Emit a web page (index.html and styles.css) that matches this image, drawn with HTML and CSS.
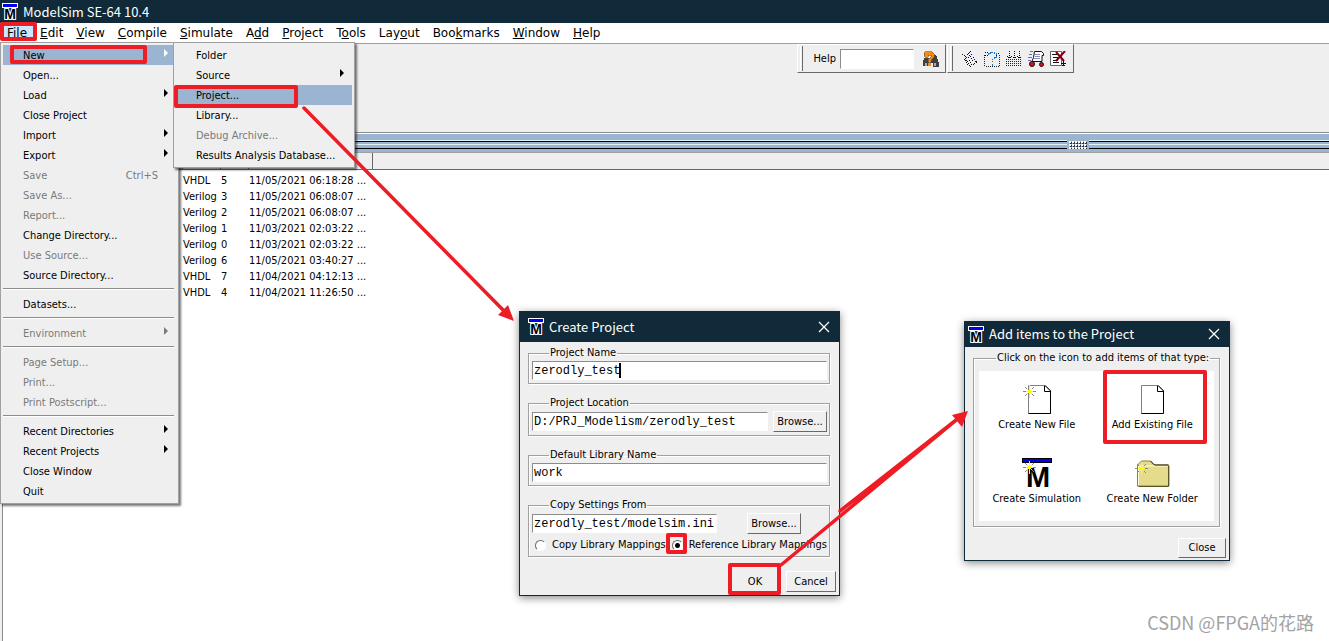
FILE: index.html
```html
<!DOCTYPE html>
<html lang="en">
<head>
<meta charset="utf-8">
<title>ModelSim SE-64 10.4</title>
<link rel="stylesheet" href="styles.css">
</head>
<body>
<svg class="defs" width="0" height="0" aria-hidden="true">
  <symbol id="logo" viewBox="0 0 16 17">
    <rect x="0" y="0" width="16" height="5" fill="#fff"/>
    <rect x="1" y="1" width="14" height="3" fill="#0000f4"/>
    <text class="logo-m" x="8" y="16">M</text>
  </symbol>
  <symbol id="spark" viewBox="0 0 13 13">
    <path d="M2 2l9 9M11 2l-9 9M0 6.500h3M10 6.500h3" stroke="#8a8a80"/>
    <path d="M6.500 0v13M3 6.500h7M4 4l5 5M9 4L4 9" stroke="#ffff00"/>
  </symbol>
  <symbol id="page" viewBox="0 0 24 30">
    <path d="M.5 .5h17l5 5v23h-22z" fill="#fff" stroke="#808080"/>
    <path d="M17 .5l5.500 5.500v22.500H.5M16.500 1v5.500h6" fill="none" stroke="#000"/>
  </symbol>
</svg>

<header class="titlebar">
  <svg class="logo"><use href="#logo"/></svg>
  <span>ModelSim SE-64 10.4</span>
</header>
<nav class="menubar">
  <button class="open"><u>F</u>ile</button><button><u>E</u>dit</button><button><u>V</u>iew</button><button><u>C</u>ompile</button><button><u>S</u>imulate</button><button>A<u>d</u>d</button><button><u>P</u>roject</button><button>T<u>o</u>ols</button><button>Lay<u>o</u>ut</button><button>Boo<u>k</u>marks</button><button><u>W</u>indow</button><button><u>H</u>elp</button>
</nav>

<div class="toolbar">
  <div class="tools help-tools">
    <i class="grip"></i>
    <label for="help">Help</label>
    <input id="help" type="text">
    <button class="icon" aria-label="Search help">
      <svg width="16" height="16" viewBox="0 0 16 16" shape-rendering="crispEdges">
        <path d="M1 7h5v8H0v-4zM7 6h3v6H7zM11 4h2l3 8v4h-6V8z" fill="#404040"/>
        <path d="M2 12h2v3H2zM11 12h2v3h-2z" fill="#aaa"/>
        <path d="M1 5V2l2-1.500h6l2 2v4L8 9v2H5V8l3-2V4H5v2H2z" fill="#f58b12" stroke="#6b4a2a" stroke-width=".6"/>
        <path d="M5 12h3v3H5z" fill="#f58b12"/>
      </svg>
    </button>
  </div>
  <div class="tools">
    <i class="grip"></i>
    <button class="icon" aria-label="Compile">
      <svg width="16" height="16" viewBox="0 0 16 16" fill="none" shape-rendering="crispEdges">
        <path d="M8.500 0v2M7.500 1v2M6.500 2v2M5.500 3v1M7.500 4v2M8.500 5v2M9.500 3v1M6.500 6v1" stroke="#000080" stroke-dasharray="1 1"/>
        <path d="M0 3.500h1M2 4.500h1M3 5.500h1M4 6.500h1M3 7.500h1M2 8.500h1M3 9.500h2M5 10.500h1M6 12.500h1M7 14.500h1M8 15.500h1M9 13.500h1M8 11.500h1M7 9.500h1M9 7.500h1M11 6.500h1M12 8.500h1M13 10.500h2M14 11.500h1M12 12.500h1M11 13.500h1M10 9.500h1M5 13.500h1M4 11.500h1" stroke="#111"/>
      </svg>
    </button>
    <button class="icon" aria-label="Compile out of date">
      <svg width="16" height="16" viewBox="0 0 16 16" fill="none" shape-rendering="crispEdges">
        <path d="M.5 4v11h15V4" stroke="#222" stroke-dasharray="1 1"/>
        <path d="M1 1.500h3M1 4.500h3M12 2.500h3M12 4.500h2" stroke="#000080" stroke-dasharray="1 1"/>
        <path d="M4 4V2h2V1h4v1h2v4h-2v2H8v3M8 12.500v2" stroke="#1e78d2" stroke-dasharray="2 1"/>
      </svg>
    </button>
    <button class="icon" aria-label="Compile all">
      <svg width="16" height="16" viewBox="0 0 16 16" fill="none" shape-rendering="crispEdges">
        <path d="M3.500 0v8M8.500 0v8M13.500 0v8" stroke="#000080" stroke-dasharray="1 1"/>
        <path d="M1 5.500h1M2 6.500h3M5 5.500h1M7 6.500h3M11 5.500h1M12 6.500h3" stroke="#000080"/>
        <path d="M0 8.500h16M0 10.500h16M0 12.500h16M0 14.500h16" stroke="#222" stroke-dasharray="1 1"/>
      </svg>
    </button>
    <button class="icon" aria-label="Simulate">
      <svg width="16" height="16" viewBox="0 0 16 16" fill="none">
        <path d="M2 .5h3M1 3.500h3M0 6.500h4M0 9.500h3" stroke="#6a6ab8"/>
        <path d="M6.500 .5h7l2 2v2h-1.500v6H4l1.500-4z" fill="#fff" stroke="#111"/>
        <path d="M7 3.500h5M7 5.500h5M6 7.500h6" stroke="#8a8ac0"/>
        <circle cx="4" cy="13" r="2.500" fill="#d3122e" stroke="#111"/><circle cx="13.500" cy="13.500" r="2" fill="#d3122e" stroke="#111"/>
      </svg>
    </button>
    <button class="icon" aria-label="Break">
      <svg width="16" height="16" viewBox="0 0 16 16" fill="none">
        <path d="M.5 .5h11v14H.5z" fill="#fff" stroke="#666"/>
        <path d="M2 3.500h5M3 6.500h5M3 9.500h5M3 11.500h6" stroke="#111"/>
        <path d="M6 1l8 9M15 0L6 10" stroke="#800010" stroke-width="2"/>
        <path d="M13.500 10v5M11 12.500h5M12 14.500h3" stroke="#000080"/>
      </svg>
    </button>
  </div>
</div>

<div class="splitter"><i class="handle"></i></div>

<main class="files">
  <table>
    <thead><tr><th class="c-name"></th><th class="c-type"></th><th class="c-order"></th><th class="c-date"></th><th></th></tr></thead>
    <tbody>
      <tr><td></td><td>VHDL</td><td>5</td><td>11/05/2021 06:18:28 ...</td><td></td></tr>
      <tr><td></td><td>Verilog</td><td>3</td><td>11/05/2021 06:08:07 ...</td><td></td></tr>
      <tr><td></td><td>Verilog</td><td>2</td><td>11/05/2021 06:08:07 ...</td><td></td></tr>
      <tr><td></td><td>Verilog</td><td>1</td><td>11/03/2021 02:03:22 ...</td><td></td></tr>
      <tr><td></td><td>Verilog</td><td>0</td><td>11/03/2021 02:03:22 ...</td><td></td></tr>
      <tr><td></td><td>Verilog</td><td>6</td><td>11/05/2021 03:40:27 ...</td><td></td></tr>
      <tr><td></td><td>VHDL</td><td>7</td><td>11/04/2021 04:12:13 ...</td><td></td></tr>
      <tr><td></td><td>VHDL</td><td>4</td><td>11/04/2021 11:26:50 ...</td><td></td></tr>
    </tbody>
  </table>
</main>

<div class="menu file-menu">
  <button class="sub active">New</button>
  <button>Open...</button>
  <button class="sub">Load</button>
  <button>Close Project</button>
  <button class="sub">Import</button>
  <button class="sub">Export</button>
  <button disabled>Save<kbd>Ctrl+S</kbd></button>
  <button disabled>Save As...</button>
  <button disabled>Report...</button>
  <button>Change Directory...</button>
  <button disabled>Use Source...</button>
  <button>Source Directory...</button>
  <hr>
  <button>Datasets...</button>
  <hr>
  <button class="sub" disabled>Environment</button>
  <hr>
  <button disabled>Page Setup...</button>
  <button disabled>Print...</button>
  <button disabled>Print Postscript...</button>
  <hr>
  <button class="sub">Recent Directories</button>
  <button class="sub">Recent Projects</button>
  <button>Close Window</button>
  <button>Quit</button>
</div>

<div class="menu new-menu">
  <button>Folder</button>
  <button class="sub">Source</button>
  <button class="active">Project...</button>
  <button>Library...</button>
  <button disabled>Debug Archive...</button>
  <button>Results Analysis Database...</button>
</div>

<section class="dialog create-dialog">
  <header>
    <svg class="logo"><use href="#logo"/></svg>
    <h2>Create Project</h2>
    <button class="close" aria-label="Close"><svg width="12" height="12" viewBox="0 0 12 12"><path d="M1 1l10 10M11 1L1 11" stroke="#fff" stroke-width="1.300"/></svg></button>
  </header>
  <div class="form">
    <fieldset>
      <legend>Project Name</legend>
      <div class="row name-row"><input type="text" aria-label="Project Name" value="zerodly_test"><i class="caret"></i></div>
    </fieldset>
    <fieldset>
      <legend>Project Location</legend>
      <div class="row"><input type="text" aria-label="Project Location" value="D:/PRJ_Modelism/zerodly_test"><button class="btn">Browse...</button></div>
    </fieldset>
    <fieldset>
      <legend>Default Library Name</legend>
      <div class="row"><input type="text" aria-label="Default Library Name" value="work"></div>
    </fieldset>
    <fieldset>
      <legend>Copy Settings From</legend>
      <div class="row ini-row"><input type="text" aria-label="Copy Settings From" value="zerodly_test/modelsim.ini"><button class="btn">Browse...</button></div>
      <div class="radios">
        <label><input type="radio" name="map">Copy Library Mappings</label>
        <label><input type="radio" name="map" checked>Reference Library Mappings</label>
      </div>
    </fieldset>
    <div class="actions"><button class="btn ok">OK</button><button class="btn">Cancel</button></div>
  </div>
</section>

<section class="dialog items-dialog">
  <header>
    <svg class="logo"><use href="#logo"/></svg>
    <h2>Add items to the Project</h2>
    <button class="close" aria-label="Close"><svg width="12" height="12" viewBox="0 0 12 12"><path d="M1 1l10 10M11 1L1 11" stroke="#fff" stroke-width="1.300"/></svg></button>
  </header>
  <div class="form">
    <fieldset>
      <legend>Click on the icon to add items of that type:</legend>
      <div class="choices">
        <button><svg width="44" height="34" viewBox="0 0 44 34"><use href="#page" x="13" y="1" width="24" height="30"/><use href="#spark" x="8" y="1" width="13" height="13"/></svg>Create New File</button>
        <button><svg width="44" height="34" viewBox="0 0 44 34"><use href="#page" x="11" y="1" width="24" height="30"/></svg>Add Existing File</button>
        <button><svg width="44" height="34" viewBox="0 0 44 34"><rect x="7.500" y=".5" width="29" height="4" fill="#0000f4" stroke="#000"/><text class="sim-m" x="23" y="29">M</text><use href="#spark" x="8" y="3" width="13" height="13"/></svg>Create Simulation</button>
        <button><svg width="44" height="34" viewBox="0 0 44 34"><path d="M7.500 28V7l4-4h9l4 4h13.500q1 0 1 1v20z" fill="#e4dc8c" stroke="#8b8430"/><path d="M8.500 27V8h29" fill="none" stroke="#fffbd0"/><path d="M38.500 8v20.500h-30" fill="none" stroke="#5a5520"/><path d="M20.500 3l4 4h14" fill="none" stroke="#222"/><use href="#spark" x="5" y="4" width="13" height="13"/></svg>Create New Folder</button>
      </div>
    </fieldset>
    <div class="actions"><button class="btn">Close</button></div>
  </div>
</section>

<svg class="notes" width="1329" height="641" viewBox="0 0 1329 641" aria-hidden="true">
  <g fill="none" stroke="#ee1c25" stroke-width="4" stroke-linejoin="round">
    <rect x="2" y="24" width="33" height="15"/>
    <rect x="12" y="47" width="133" height="15"/>
    <rect x="176" y="87" width="120" height="19"/>
    <rect x="668" y="535" width="17" height="17"/>
    <rect x="730" y="565" width="49" height="28"/>
    <rect x="1105" y="372" width="100" height="70"/>
    <path d="M304 108L508 315M781 565L960 417M840 511L960 417" stroke-width="3.500" stroke-linecap="round"/>
  </g>
  <path d="M514 321L498 315L508 305zM968 411L962 427L952 415z" fill="#ee1c25"/>
</svg>
<p class="watermark">CSDN @FPGA的花路</p>
</body>
</html>
```
FILE: styles.css
```css
* { box-sizing: border-box; }

body {
  margin: 0;
  min-height: 100vh;
  display: flex;
  flex-direction: column;
  position: relative;
  overflow: hidden;
  background: #efefef;
  color: #000;
  font: 11px/14px "DejaVu Sans Condensed", "Noto Sans", sans-serif;
}

button, input { font: inherit; color: inherit; }
button { border: 0; padding: 0; background: none; white-space: nowrap; }
.defs { position: absolute; }

.logo { width: 16px; height: 17px; flex: none; overflow: visible; }
.logo-m {
  font: bold 14px/14px "Liberation Sans", sans-serif;
  text-anchor: middle;
  fill: #000;
  stroke: #fff;
  stroke-width: 2px;
  paint-order: stroke;
}

.titlebar {
  height: 23px;
  padding-left: 2px;
  display: flex;
  align-items: center;
  gap: 5px;
  background: #102a39;
  color: #fff;
  font: 13px/20px "Noto Sans CJK SC", sans-serif;
}

.menubar {
  height: 20px;
  padding-left: 1px;
  display: flex;
  background: #fff;
  font: 12px/18px "DejaVu Sans", sans-serif;
}
.menubar button { padding: 0 7px 0 6px; }
.menubar .open { background: linear-gradient(#cce8ff, #cce8ff) 3px 2px / 29px 15px no-repeat; }

.toolbar {
  height: 90px;
  display: flex;
  align-items: flex-start;
  padding-left: 60%;
  gap: 1px;
  border-top: 1px solid #a0a0a0;
  border-bottom: 1px solid #8c8c8c;
}
.tools {
  height: 29px;
  display: flex;
  align-items: center;
  gap: 6px;
  padding: 0 7px 0 2px;
  border: 1px solid #fff;
  border-right-color: #696969;
  border-bottom-color: #696969;
}
.grip {
  width: 3px;
  height: 25px;
  margin-right: 3px;
  border-left: 1px solid #fff;
  border-right: 1px solid #696969;
}
.tools input {
  width: 74px;
  height: 20px;
  border: 1px solid #fff;
  border-top-color: #8c8c8c;
  border-left-color: #8c8c8c;
  background: #fff;
}
.icon { width: 16px; height: 16px; line-height: 0; }
.help-tools { gap: 4px; padding-right: 6px; }
.help-tools .grip { margin-right: 6px; }
.help-tools .icon { margin-left: 5px; }

.splitter {
  height: 20px;
  padding-top: 7px;
  border-top: 1px solid #fff;
  border-bottom: 1px solid #a0a0a0;
  background: #9bb4d1;
  display: flex;
  align-items: flex-start;
}
.splitter::before, .splitter::after {
  content: "";
  height: 6px;
  border-top: 1px solid #000;
  border-bottom: 1px solid #000;
  background: linear-gradient(#9bb4d1 2px, #dff3f8 2px 3px, #9bb4d1 3px);
  box-shadow: 0 -1px #dff3f8;
}
.splitter::before { flex: 1067; }
.splitter::after { flex: 240; }
.handle {
  width: 18px;
  height: 8px;
  margin: 0 2px;
  background:
    radial-gradient(circle at 1px 1px, #fff 1px, transparent 1px) 0 0 / 3px 3px,
    radial-gradient(circle at 1px 1px, #333 1px, transparent 1px) 1px 1px / 3px 3px;
}

.files { flex: 1; margin-left: 2px; border-left: 1px solid #8c8c8c; background: #fff; }
table { width: 100%; border-collapse: collapse; table-layout: fixed; }
th { height: 16px; padding: 0; background: #efefef; border-right: 1px solid #696969; border-bottom: 1px solid #696969; }
th:last-child { border-right: 0; }
tbody::before { content: ""; display: block; height: 3px; }
td { height: 16px; padding: 0 0 0 1px; white-space: nowrap; }
.c-name { width: 179px; }
.c-type { width: 38px; }
.c-order { width: 28px; }
.c-date { width: 124px; }

.menu {
  position: absolute;
  top: 42px;
  padding: 2px;
  border: 1px solid #a0a0a0;
  background: #efefef;
  box-shadow: 2px 2px 2px #0008;
}
.file-menu { left: 0; width: 179px; }
.new-menu { left: 173px; width: 182px; }
.menu button {
  display: flex;
  align-items: center;
  width: 100%;
  height: 20px;
  padding: 2px 8px 0 20px;
}
.menu button:disabled { color: #7a7a7a; }
.menu .active { background: #9bb4d1; }
.menu kbd { margin-left: auto; padding-right: 10px; font: inherit; }
.menu .sub::after {
  content: "";
  margin: 0 0 6px auto;
  border: 4px solid transparent;
  border-left-color: currentColor;
  border-right: 0;
}
.file-menu .active::after { border-left-color: #fff; }
.menu hr { height: 2px; margin: 3px 2px 4px 0; border: 0; border-top: 1px solid #8c8c8c; border-bottom: 1px solid #fff; }

.dialog {
  position: absolute;
  border: 1px solid #102a39;
  background: #efefef;
  box-shadow: 0 2px 8px #0007;
}
.create-dialog { left: 519px; top: 311px; width: 321px; }
.items-dialog { left: 964px; top: 321px; width: 266px; }
.dialog header {
  height: 30px;
  display: flex;
  align-items: center;
  gap: 5px;
  padding: 0 9px 1px 8px;
  background: #102a39;
  color: #fff;
}
.items-dialog header { height: 25px; padding-left: 3px; }
.dialog h2 { margin: 0; font: 13px/20px "Noto Sans CJK SC", sans-serif; }
.close { margin-left: auto; line-height: 0; }

.form { padding: 4px 3px 3px 8px; display: flex; flex-direction: column; gap: 12px; }
fieldset {
  min-width: 0;
  margin: 0 6px 0 0;
  padding: 1px 2px 3px 3px;
  border: 1px solid #a0a0a0;
  box-shadow: 1px 1px #fff, inset 1px 1px #fff;
}
legend { margin-left: 17px; padding: 0 1px; }
.row { display: flex; align-items: center; position: relative; gap: 5px; }
.row input {
  flex: 1;
  min-width: 0;
  height: 19px;
  padding: 0 1px;
  border: 1px solid #fff;
  border-top-color: #8c8c8c;
  border-left-color: #8c8c8c;
  background: #fff;
  font: 12px/16px "Liberation Mono", monospace;
}
.caret { position: absolute; left: 87px; top: 2px; width: 2px; height: 15px; background: #000; }
.ini-row { gap: 30px; padding-right: 26px; }
.btn {
  height: 21px;
  min-width: 54px;
  border: 1px solid #fff;
  border-right-color: #696969;
  border-bottom-color: #696969;
  background: #efefef;
}
.radios { display: flex; justify-content: space-between; padding: 4px 0 1px 3px; }
.radios label { display: flex; align-items: center; gap: 6px; white-space: nowrap; }
.radios input {
  appearance: none;
  width: 11px;
  height: 11px;
  margin: 0;
  border: 1px solid #fff;
  border-top-color: #696969;
  border-left-color: #696969;
  border-radius: 50%;
  background: #fff;
}
.radios input:checked { background: radial-gradient(#000 2px, #fff 3px); }
.actions { display: flex; justify-content: flex-end; gap: 6px; padding-top: 2px; }
.actions .btn { min-width: 50px; }
.actions .ok { border-color: transparent; }

.items-dialog .form { padding-bottom: 2px; gap: 9px; }
.items-dialog fieldset { padding: 6px 5px 5px; }
.items-dialog .actions .btn { height: 20px; min-width: 48px; }
.choices { display: grid; grid-template-columns: 1fr 1fr; grid-auto-rows: 74px; padding: 0 4px 2px 0; background: #fff; }
.choices button { display: flex; flex-direction: column; align-items: center; justify-content: center; }
.sim-m { font: bold 29px/29px "Liberation Sans", sans-serif; text-anchor: middle; }

.notes { position: absolute; left: 0; top: 0; pointer-events: none; }
.watermark {
  position: absolute;
  right: 15px;
  bottom: 6px;
  margin: 0;
  color: #a3a3a3;
  font: 18px/26px "Noto Sans CJK SC", sans-serif;
}
```
